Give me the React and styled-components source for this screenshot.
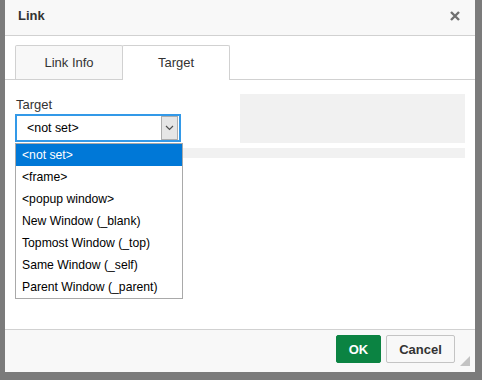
import React from "react";
import styled, { createGlobalStyle } from "styled-components";

const Global = createGlobalStyle`
  html, body { margin: 0; padding: 0; }
  body {
    background: #7b7b7b;
    font-family: "Liberation Sans", Arial, sans-serif;
    width: 482px;
    height: 380px;
    overflow: hidden;
  }
`;

const Page = styled.div`
  padding: 0 7px 8px 5px;
  height: 380px;
  box-sizing: border-box;
`;

const Dialog = styled.div`
  position: relative;
  width: 470px;
  height: 372px;
  background: #fff;
  display: flex;
  flex-direction: column;
`;

const TitleBar = styled.div`
  height: 31px;
  padding: 0 15px 4px 13px;
  border-bottom: 1px solid #d1d1d1;
  background: #f8f8f8;
  display: flex;
  align-items: center;
  justify-content: space-between;
`;

const Title = styled.span`
  font-size: 13px;
  font-weight: bold;
  color: #333;
`;

const CloseBtn = styled.span`
  display: flex;
  width: 10px;
  height: 10px;
`;

const TabBar = styled.div`
  display: flex;
  padding: 9px 10px 0 10px;
  border-bottom: 1px solid #d1d1d1;
`;

const Tab = styled.div`
  width: 106px;
  height: 33px;
  border: 1px solid #d1d1d1;
  border-bottom: none;
  border-radius: 2px 2px 0 0;
  margin-bottom: ${(p) => (p.$active ? "-1px" : "0")};
  padding-bottom: ${(p) => (p.$active ? "1px" : "0")};
  margin-left: ${(p) => (p.$active ? "-1px" : "0")};
  background: ${(p) => (p.$active ? "#fff" : "#f8f8f8")};
  display: flex;
  align-items: center;
  justify-content: center;
  font-size: 13px;
  color: #333;
`;

const Content = styled.div`
  position: relative;
  flex: 1;
  padding: 14px 10px 0 10px;
`;

const Row = styled.div`
  display: grid;
  grid-template-columns: 225px 1fr;
`;

const Field = styled.div`
  display: flex;
  flex-direction: column;
`;

const Label = styled.label`
  height: 20px;
  line-height: 21px;
  font-size: 13px;
  color: #333;
  padding-left: 1px;
`;

const Select = styled.div`
  width: 166px;
  height: 28px;
  box-sizing: border-box;
  border: 2px solid #3399e8;
  display: flex;
  align-items: center;
  justify-content: space-between;
  padding: 0 1px 0 10px;
  font-size: 12.4px;
  color: #000;
`;

const ArrowBtn = styled.span`
  width: 17px;
  height: 24px;
  box-sizing: border-box;
  background: #e6e6e6;
  border: 1px solid #adadad;
  display: flex;
  align-items: center;
  justify-content: center;
`;

const GrayBox = styled.div`
  height: 49px;
  background: #f1f1f1;
`;

const Bar = styled.div`
  margin-top: 5px;
  height: 10px;
  background: #f1f1f1;
`;

const List = styled.ul`
  position: absolute;
  left: 10px;
  top: 63px;
  width: 168px;
  box-sizing: border-box;
  margin: 0;
  padding: 0;
  list-style: none;
  background: #fff;
  border: 1px solid #a9a9a9;
`;

const Item = styled.li`
  height: 22px;
  line-height: 22px;
  padding-left: 6px;
  font-size: 12.2px;
  color: ${(p) => (p.$selected ? "#fff" : "#000")};
  background: ${(p) => (p.$selected ? "#0078d7" : "transparent")};
  white-space: nowrap;
`;

const Footer = styled.div`
  height: 37px;
  border-top: 1px solid #d1d1d1;
  background: #f8f8f8;
  display: flex;
  justify-content: flex-end;
  align-items: flex-start;
  padding: 5px 20px 0 0;
  box-sizing: content-box;
  gap: 5px;
`;

const Button = styled.button`
  height: 28px;
  box-sizing: border-box;
  padding: 0;
  width: ${(p) => (p.$primary ? "45px" : "69px")};
  background: ${(p) => (p.$primary ? "#0b8342" : "#f8f8f8")};
  border: 1px solid ${(p) => (p.$primary ? "#0b8342" : "#c4c4c4")};
  border-radius: 2px;
  color: ${(p) => (p.$primary ? "#fff" : "#333")};
  font-family: "Liberation Sans", Arial, sans-serif;
  font-size: 13px;
  font-weight: bold;
`;

const Grip = styled.span`
  position: absolute;
  right: 5px;
  bottom: 6px;
  width: 0;
  height: 0;
  border-left: 10px solid transparent;
  border-bottom: 10px solid #c3c3c3;
`;

const options = [
  "<not set>",
  "<frame>",
  "<popup window>",
  "New Window (_blank)",
  "Topmost Window (_top)",
  "Same Window (_self)",
  "Parent Window (_parent)",
];

export default function App() {
  return (
    <>
      <Global />
      <Page>
        <Dialog>
          <TitleBar>
            <Title>Link</Title>
            <CloseBtn>
              <svg width="10" height="10" viewBox="0 0 10 10">
                <path d="M1 1L9 9M9 1L1 9" stroke="#707070" strokeWidth="2.4" />
              </svg>
            </CloseBtn>
          </TitleBar>
          <TabBar>
            <Tab>Link Info</Tab>
            <Tab $active>Target</Tab>
          </TabBar>
          <Content>
            <Row>
              <Field>
                <Label>Target</Label>
                <Select>
                  <span>&lt;not set&gt;</span>
                  <ArrowBtn>
                    <svg width="9" height="6" viewBox="0 0 9 6">
                      <path d="M1 1L4.5 4.5L8 1" stroke="#505050" strokeWidth="1.2" fill="none" />
                    </svg>
                  </ArrowBtn>
                </Select>
              </Field>
              <GrayBox />
            </Row>
            <Bar />
            <List>
              {options.map((o, i) => (
                <Item key={o} $selected={i === 0}>
                  {o}
                </Item>
              ))}
            </List>
          </Content>
          <Footer>
            <Button $primary>OK</Button>
            <Button>Cancel</Button>
          </Footer>
          <Grip />
        </Dialog>
      </Page>
    </>
  );
}
